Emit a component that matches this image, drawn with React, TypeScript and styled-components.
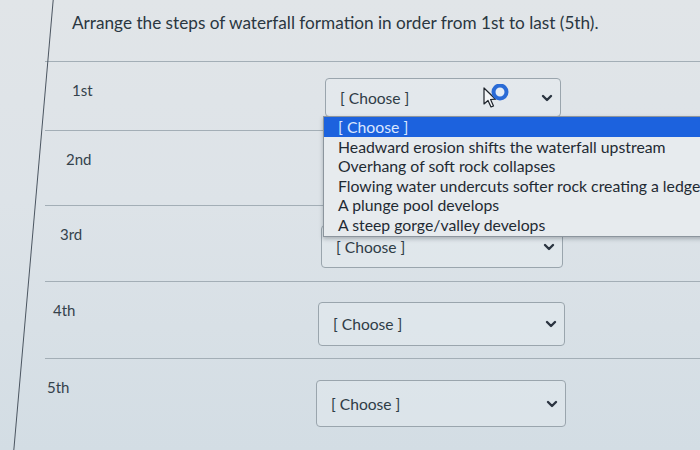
import React from 'react';
import styled, { createGlobalStyle } from 'styled-components';

const GlobalStyle = createGlobalStyle`
  html, body { margin: 0; padding: 0; }
  body {
    font-family: Lato, "Open Sans", sans-serif;
    color: #2d3b45;
  }
`;

const Screen = styled.div`
  position: relative;
  width: 700px;
  height: 450px;
  overflow: hidden;
  background: linear-gradient(180deg, #e1e5e8 0%, #dde3e8 45%, #d3dde4 100%);

  &::before {
    content: '';
    position: absolute;
    top: -10px;
    bottom: -10px;
    left: 33px;
    border-left: 1px solid #4b5560;
    transform: skewX(-5deg);
  }
`;

const Title = styled.h1`
  margin: 0;
  padding: 12px 0 0 72px;
  font-size: 17.2px;
  line-height: 22px;
  font-weight: 400;
  color: #2a3741;
`;

const Answers = styled.div`
  margin: 27px 0 0 45px;
`;

const Row = styled.div<{ $h: number }>`
  display: flex;
  align-items: flex-start;
  box-sizing: border-box;
  height: ${p => p.$h}px;
  border-top: 1px solid #a3aeb6;
`;

const Label = styled.div<{ $indent: number }>`
  width: 271px;
  flex: none;
  box-sizing: border-box;
  padding: 19px 0 0 ${p => p.$indent}px;
  font-size: 15px;
  line-height: 18px;
  color: #34424c;
`;

const SelectWrap = styled.div<{ $x: number; $top: number }>`
  position: relative;
  margin: ${p => p.$top}px 0 0 ${p => p.$x}px;
`;

const Select = styled.div<{ $w: number; $h: number }>`
  position: relative;
  display: flex;
  align-items: center;
  justify-content: space-between;
  box-sizing: border-box;
  width: ${p => p.$w}px;
  height: ${p => p.$h}px;
  padding: 0 7px 0 14px;
  border: 1px solid #9aa5ad;
  border-radius: 4px;
  background: rgba(236, 240, 243, 0.35);
  font-size: 15.6px;
  color: #2f3c46;
`;

const Menu = styled.ul`
  position: absolute;
  top: calc(100% - 1px);
  left: -2px;
  z-index: 2;
  width: 420px;
  margin: 0;
  padding: 0 0 2px;
  list-style: none;
  background: #e7ebee;
  border: 1px solid #8c959d;
  box-shadow: 0 2px 4px rgba(40, 50, 60, 0.3);
`;

const Option = styled.li<{ $active?: boolean }>`
  height: 19.5px;
  line-height: 19px;
  padding-left: 14px;
  font-size: 15.8px;
  white-space: nowrap;
  color: ${p => (p.$active ? '#dbe7ff' : '#1f2a33')};
  background: ${p => (p.$active ? '#1c62de' : 'transparent')};
`;

const Pointer = styled.div`
  position: absolute;
  left: 156px;
  top: 5px;
  width: 32px;
  height: 28px;
  pointer-events: none;
`;

const Chevron = () => (
  <svg width="12" height="8" viewBox="0 0 12 8">
    <polyline points="2,2 6,6 10,2" fill="none" stroke="#2b3440" strokeWidth="2.4" strokeLinecap="round" strokeLinejoin="round" />
  </svg>
);

const rows = [
  { label: '1st', indent: 27, h: 69, x: 9, top: 16, w: 236, sh: 39 },
  { label: '2nd', indent: 21, h: 75, x: 7, top: 18, w: 239, sh: 42 },
  { label: '3rd', indent: 15, h: 76, x: 5, top: 19, w: 242, sh: 43 },
  { label: '4th', indent: 8, h: 77, x: 2, top: 20, w: 247, sh: 44 },
  { label: '5th', indent: 2, h: 100, x: 0, top: 21, w: 250, sh: 47 },
];

const options = [
  'Headward erosion shifts the waterfall upstream',
  'Overhang of soft rock collapses',
  'Flowing water undercuts softer rock creating a ledge',
  'A plunge pool develops',
  'A steep gorge/valley develops',
];

const App = () => {
  return (
    <Screen>
      <GlobalStyle />
      <Title>Arrange the steps of waterfall formation in order from 1st to last (5th).</Title>
      <Answers>
        {rows.map((r, i) => (
          <Row key={r.label} $h={r.h}>
            <Label $indent={r.indent}>{r.label}</Label>
            <SelectWrap $x={r.x} $top={r.top}>
              <Select $w={r.w} $h={r.sh}>
                <span>[ Choose ]</span>
                <Chevron />
                {i === 0 && (
                  <Pointer>
                    <svg width="32" height="28" viewBox="0 0 32 28">
                      <path d="M2 4 L2 20 L6 16.5 L9 23 L11.5 22 L8.6 15.5 L13.5 15.2 Z" fill="#f4f6f8" stroke="#1d232a" strokeWidth="1.2" strokeLinejoin="round" />
                      <circle cx="18" cy="8" r="6.5" fill="#e4ecf5" stroke="#2a6bd6" strokeWidth="4" />
                    </svg>
                  </Pointer>
                )}
              </Select>
              {i === 0 && (
                <Menu>
                  <Option $active>[ Choose ]</Option>
                  {options.map(o => (
                    <Option key={o}>{o}</Option>
                  ))}
                </Menu>
              )}
            </SelectWrap>
          </Row>
        ))}
      </Answers>
    </Screen>
  );
};

export default App;
